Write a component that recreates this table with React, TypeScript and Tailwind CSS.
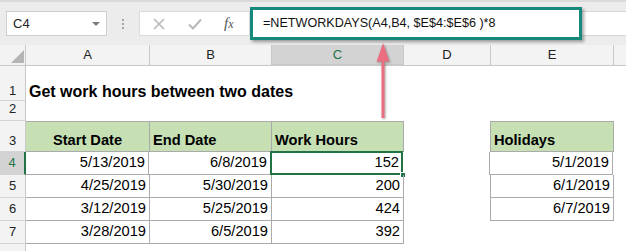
import React from 'react';

// column widths for A..E and the leftover bit of F
const colWidths = [124, 122, 132, 87, 123, 12];
const colNames = ['A', 'B', 'C', 'D', 'E', ''];

const rows = [
  { n: 1, h: 35 },
  { n: 2, h: 20 },
  { n: 3, h: 31 },
  { n: 4, h: 23, a: '5/13/2019', b: '6/8/2019', c: '152', e: '5/1/2019' },
  { n: 5, h: 23, a: '4/25/2019', b: '5/30/2019', c: '200', e: '6/1/2019' },
  { n: 6, h: 23, a: '3/12/2019', b: '5/25/2019', c: '424', e: '6/7/2019' },
  { n: 7, h: 23, a: '3/28/2019', b: '6/5/2019', c: '392' },
  { n: 8, h: 20 },
];

function FormulaBar() {
  return (
    <div className="h-[45px] bg-[#ececec] border-t-2 border-[#dadada] flex items-start pt-[9px]">
      <div className="ml-[6px] w-[101px] h-[25px] bg-white border border-[#cfcfcf] flex items-center justify-between pl-[6px] pr-[6px]">
        <span className="text-[13px] text-[#222]">C4</span>
        <span className="w-0 h-0 border-l-[4px] border-r-[4px] border-t-[4px] border-l-transparent border-r-transparent border-t-[#7a7a7a]"></span>
      </div>
      <div className="w-[32px] h-[25px] flex flex-col items-center justify-center gap-[2px]">
        <span className="w-[2px] h-[2px] bg-[#a8a8a8]"></span>
        <span className="w-[2px] h-[2px] bg-[#a8a8a8]"></span>
        <span className="w-[2px] h-[2px] bg-[#a8a8a8]"></span>
      </div>
      <div className="w-[111px] h-[25px] bg-white border border-[#dcdcdc] flex items-center">
        <svg width="12" height="12" viewBox="0 0 12 12" className="ml-[13px]">
          <path d="M1 1 L11 11 M11 1 L1 11" stroke="#b9b9b9" strokeWidth="1.6" />
        </svg>
        <svg width="14" height="12" viewBox="0 0 14 12" className="ml-[23px]">
          <path d="M1 6.5 L5 10.5 L13 1.5" stroke="#b9b9b9" strokeWidth="2" fill="none" />
        </svg>
        <span className="ml-[22px] text-[15px] italic text-[#555] font-['Liberation_Serif',serif] leading-none">
          f<span className="text-[12px]">x</span>
        </span>
      </div>
      <div className="flex-1 h-[25px] ml-[1px] bg-white border-y border-[#d6d6d6]"></div>
    </div>
  );
}

function ColumnHeaders() {
  return (
    <div className="flex h-[21px] bg-[#f3f3f3] border-b border-[#c8c8c8]">
      <div className="w-[26px] shrink-0 border-r border-[#c8c8c8] relative">
        <svg width="13" height="13" viewBox="0 0 13 13" className="absolute left-[11px] top-[5px]">
          <path d="M13 0 L13 13 L0 13 Z" fill="#b5b5b5" />
        </svg>
      </div>
      {colWidths.map((w, i) => (
        <div
          key={i}
          style={{ width: w }}
          className={`shrink-0 flex items-center justify-center text-[13px] ${
            i === 2
              ? 'bg-[#d3d3d3] text-[#217346] border-b-2 border-[#217346] -mb-px'
              : 'text-[#222]'
          } ${i < 5 ? 'border-r border-[#c8c8c8]' : ''}`}
        >
          {colNames[i]}
        </div>
      ))}
    </div>
  );
}

function Cell({
  w,
  children,
  className = '',
}: {
  w: number;
  children?: React.ReactNode;
  className?: string;
}) {
  return (
    <div style={{ width: w }} className={`shrink-0 flex items-end relative ${className}`}>
      {children}
    </div>
  );
}

export default function App() {
  const grid = 'border-[#ababab]';

  return (
    <div className="w-[626px] h-[251px] overflow-hidden bg-white relative font-['Liberation_Sans',Arial,sans-serif]">
      <FormulaBar />
      <ColumnHeaders />

      {rows.map((r) => {
        const inTable = r.n >= 3 && r.n <= 7;
        const inHoliday = r.n >= 3 && r.n <= 6;
        const head = r.n === 3;
        const fill = head ? 'bg-[#c6e0b4]' : '';
        const tb = inTable ? `border-r border-b ${grid} ${fill} ${head ? 'border-t' : ''}` : '';
        const hb = inHoliday ? `border-x border-b ${grid} ${fill} ${head ? 'border-t' : ''}` : '';
        const num = 'text-[14.67px] leading-[17px] text-black justify-end pr-[3px] pb-[3px]';
        const hdr = 'text-[14.67px] leading-[17px] font-bold text-black pb-[2px]';

        return (
          <div key={r.n} style={{ height: r.h }} className="flex">
            <div
              className={`w-[26px] shrink-0 flex items-end justify-center text-[13px] leading-[17px] ${
                r.n === 4
                  ? 'bg-[#d3d3d3] text-[#217346] border-r-2 border-[#217346]'
                  : 'bg-[#f3f3f3] text-[#222] border-r border-[#c8c8c8]'
              } border-b border-b-[#d4d4d4] ${r.n === 1 ? 'pb-[1px]' : r.n === 3 ? 'pb-[2px]' : 'pb-[3px]'}`}
            >
              {r.n < 8 ? r.n : ''}
            </div>

            {/* A */}
            <Cell w={r.n === 4 ? 123 : 124} className={`${tb} ${head ? `${hdr} justify-center` : r.a ? num : ''}`}>
              {r.n === 1 && (
                <span className="pl-[3px] text-[16px] leading-[19px] font-bold text-black whitespace-nowrap">
                  Get work hours between two dates
                </span>
              )}
              {head ? 'Start Date' : r.a}
            </Cell>

            {/* B */}
            <Cell w={122} className={`${tb} ${head ? `${hdr} pl-[3px]` : r.b ? num : ''}`}>
              {head ? 'End Date' : r.b}
            </Cell>

            {/* C */}
            <Cell w={132} className={`${tb} ${head ? `${hdr} pl-[3px]` : r.c ? num : ''}`}>
              {head ? 'Work Hours' : r.c}
              {r.n === 4 && (
                <>
                  <div className="absolute -left-[1px] -top-[1px] right-[-1px] bottom-[-1px] border-2 border-[#217346]"></div>
                  <div className="absolute right-[-4px] bottom-[-4px] w-[6px] h-[6px] bg-[#217346] border border-white"></div>
                </>
              )}
            </Cell>

            {/* D */}
            <Cell w={86} />

            {/* E */}
            <Cell w={124} className={`${hb} ${head ? `${hdr} pl-[3px]` : r.e ? num : ''}`}>
              {head ? 'Holidays' : r.e}
            </Cell>
          </div>
        );
      })}

      {/* highlighted formula box */}
      <div className="absolute left-[250px] top-[7px] w-[332px] h-[33px] border-[3px] border-[#16897d] bg-white shadow-[2px_2px_3px_rgba(0,0,0,0.35)] flex items-center pl-[10px]">
        <span className="text-[12.6px] text-[#111] whitespace-nowrap">=NETWORKDAYS(A4,B4, $E$4:$E$6 )*8</span>
      </div>

      {/* pointer arrow */}
      <svg
        width="20"
        height="80"
        viewBox="0 0 20 80"
        className="absolute left-[373px] top-[42px] drop-shadow-[1px_1px_1px_rgba(0,0,0,0.35)]"
      >
        <path d="M10 1 L16.5 20 L11.5 19 L11.5 76 L8.5 76 L8.5 19 L3.5 20 Z" fill="#ea6e80" />
      </svg>
    </div>
  );
}
